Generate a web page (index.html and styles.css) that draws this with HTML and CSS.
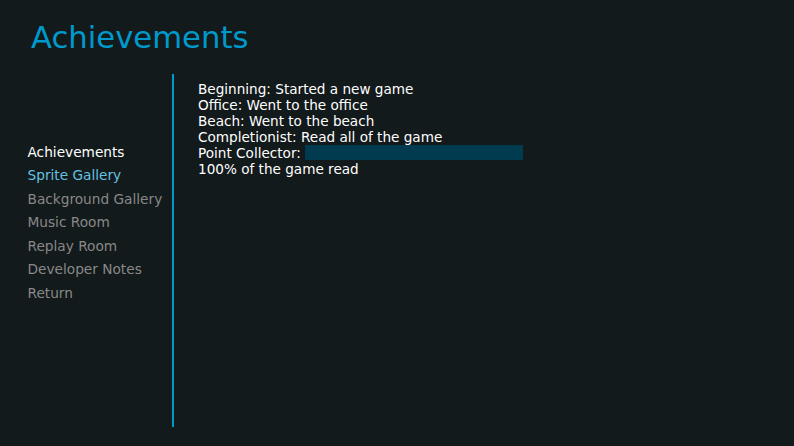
FILE: index.html
```html
<!DOCTYPE html>
<html>
<head>
<meta charset="utf-8">
<link rel="stylesheet" href="styles.css">
</head>
<body>
<div class="screen">
  <div class="title">Achievements</div>
  <div class="main">
    <nav class="nav">
      <div class="nav-item selected">Achievements</div>
      <div class="nav-item hover">Sprite Gallery</div>
      <div class="nav-item">Background Gallery</div>
      <div class="nav-item">Music Room</div>
      <div class="nav-item">Replay Room</div>
      <div class="nav-item">Developer Notes</div>
      <div class="nav-item">Return</div>
    </nav>
    <div class="divider"></div>
    <div class="content">
      <div class="line">Beginning: Started a new game</div>
      <div class="line">Office: Went to the office</div>
      <div class="line">Beach: Went to the beach</div>
      <div class="line">Completionist: Read all of the game</div>
      <div class="line row"><span>Point Collector:</span><span class="bar"></span></div>
      <div class="line">100% of the game read</div>
    </div>
  </div>
</div>
</body>
</html>
```
FILE: styles.css
```css
html, body {
  margin: 0;
  padding: 0;
  background: #131a1b;
}
.screen {
  width: 794px;
  height: 446px;
  background: #131a1b;
  font-family: "DejaVu Sans", sans-serif;
  overflow: hidden;
}
.title {
  padding: 17.6px 0 0 31px;
  height: 40px;
  line-height: 40px;
  font-size: 30.7px;
  color: #0099cc;
}
.main {
  margin-top: 16.4px;
  height: 353px;
  display: flex;
}
.nav {
  box-sizing: border-box;
  width: 172px;
  padding: 66.9px 0 0 27.5px;
  font-size: 13.7px;
}
.nav-item {
  height: 23.5px;
  line-height: 23.5px;
  color: #888888;
  white-space: nowrap;
}
.nav-item.selected { color: #ffffff; }
.nav-item.hover { color: #66c1e0; }
.divider {
  width: 2px;
  background: #0099cc;
}
.content {
  padding: 6.6px 0 0 24px;
  font-size: 13.6px;
  color: #ffffff;
}
.line {
  height: 16px;
  line-height: 16px;
  white-space: nowrap;
}
.row {
  display: flex;
  align-items: center;
  gap: 4px;
}
.bar {
  display: block;
  width: 218px;
  height: 15.5px;
  background: #003b4f;
}
```
